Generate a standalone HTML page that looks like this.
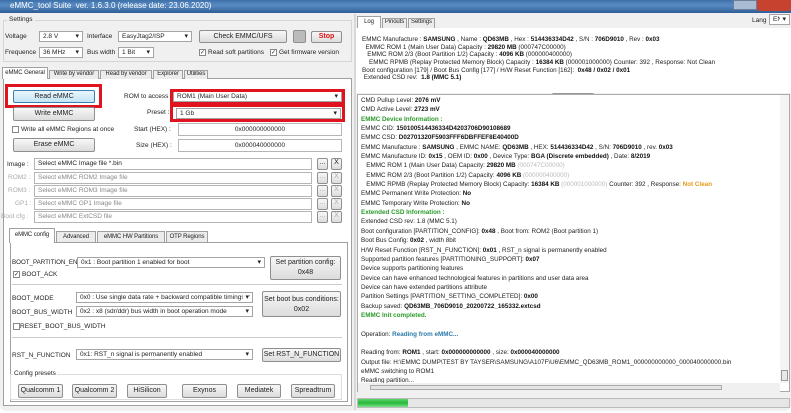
<!DOCTYPE html>
<html><head><meta charset="utf-8"><style>
*{box-sizing:border-box;margin:0;padding:0}
body{width:791px;height:413px;overflow:hidden;background:#fff;font-family:"Liberation Sans",sans-serif;font-size:7px;color:#222;position:relative}
.a{position:absolute}
.win{position:absolute;left:0;top:0;width:791px;height:411px;background:#f0f0f0;border-radius:0 0 6px 6px;overflow:hidden}
.title{left:0;top:0;width:791px;height:13px;background:linear-gradient(#3d6fa8,#5a8cc4 40%,#2f5d95);color:#fff;font-size:8px;padding:1px 0 0 10px}
.btn{position:absolute;background:linear-gradient(#f7f7f7,#dcdcdc);border:1px solid #8e8f8f;border-radius:2px;text-align:center;font-size:7px;color:#222;white-space:nowrap}
.cb{position:absolute;background:#fff;border:1px solid #a5a5a5;font-size:6.5px;padding:1px 3px;white-space:nowrap;overflow:hidden}
.cb::after{content:"▾";position:absolute;right:3px;top:0;font-size:7px;background:#fff;padding-left:2px}
.fld{position:absolute;background:#fff;border:1px solid #b5b5b5;font-size:6.5px;padding:1px 3px;white-space:nowrap;overflow:hidden}
.lbl{position:absolute;font-size:6.5px;white-space:nowrap}
.red{position:absolute;border:3px solid #e0141e}
.tab{position:absolute;border:1px solid #a0a0a0;border-bottom:none;background:#ececec;font-size:6px;text-align:center;white-space:nowrap;overflow:hidden;letter-spacing:-0.1px}
.chk{position:absolute;width:7px;height:7px;border:1px solid #888;background:#fff;font-size:6px;line-height:6px;color:#224;text-align:center}
.log div{height:9.35px;line-height:9.35px;white-space:nowrap;font-size:6.3px}
.inf div{height:7.7px;line-height:7.7px;white-space:nowrap;font-size:6.3px}
b{font-weight:bold;color:#111}
.g{color:#2a9a2a;font-weight:bold}
.gr{color:#bbb}
</style></head><body>
<div class="win">
<div class="a title">eMMC_tool Suite&nbsp; ver. 1.6.3.0 (release date: 23.06.2020)</div>
<div class="a" style="left:757px;top:0;width:34px;height:11px;background:#c8432f;border-radius:0 0 3px 3px"></div>
<div class="a" style="left:733px;top:0;width:24px;height:10px;background:#a9bcd4;border:1px solid #6a7f9c"></div>

<div class="a" style="left:3px;top:20px;width:349px;height:42px;border:1px solid #d5d5d5"></div>
<div class="lbl" style="left:7px;top:16px;background:#f0f0f0;padding:0 2px">Settings</div>
<div class="lbl" style="left:5px;top:33px">Voltage</div>
<div class="cb" style="left:39px;top:31px;width:44px;height:11px">2.8 V</div>
<div class="lbl" style="left:87px;top:33px">Interface</div>
<div class="cb" style="left:118px;top:31px;width:74px;height:11px">EasyJtag2/ISP</div>
<div class="btn" style="left:199px;top:30px;width:88px;height:13px;line-height:11px">Check EMMC/UFS</div>
<div class="btn" style="left:293px;top:30px;width:13px;height:13px;background:#bbb"></div>
<div class="btn" style="left:311px;top:31px;width:31px;height:12px;line-height:10px;color:#d11;font-weight:bold">Stop</div>
<div class="lbl" style="left:5px;top:49px">Frequence</div>
<div class="cb" style="left:39px;top:47px;width:44px;height:11px">36 MHz</div>
<div class="lbl" style="left:87px;top:49px">Bus width</div>
<div class="cb" style="left:118px;top:47px;width:36px;height:11px">1 Bit</div>
<div class="chk" style="left:199px;top:49px">✓</div><div class="lbl" style="left:208px;top:49px">Read soft partitions</div>
<div class="chk" style="left:270px;top:49px">✓</div><div class="lbl" style="left:279px;top:49px">Get firmware version</div>

<div class="a" style="left:3px;top:78px;width:349px;height:328px;background:#fff;border:1px solid #a0a0a0"></div>
<div class="tab" style="left:2px;top:67px;width:46px;height:12px;background:#fff;line-height:11px">eMMC General</div>
<div class="tab" style="left:49px;top:70px;width:50px;height:9px">Write by vendor</div>
<div class="tab" style="left:100px;top:70px;width:52px;height:9px">Read by vendor</div>
<div class="tab" style="left:153px;top:70px;width:30px;height:9px">Explorer</div>
<div class="tab" style="left:184px;top:70px;width:24px;height:9px">Utilities</div>

<div class="btn" style="left:13px;top:90px;width:82px;height:13px;line-height:11px;background:linear-gradient(#eaf6fd,#c4e5f6);border-color:#3c7fb1">Read eMMC</div>
<div class="red" style="left:5px;top:84px;width:97px;height:24px"></div>
<div class="btn" style="left:13px;top:107px;width:82px;height:14px;line-height:12px">Write eMMC</div>
<div class="chk" style="left:12px;top:126px"></div><div class="lbl" style="left:21px;top:126px">Write all eMMC Regions at once</div>
<div class="btn" style="left:13px;top:138px;width:82px;height:14px;line-height:12px">Erase eMMC</div>

<div class="lbl" style="left:124px;top:93px">ROM to access :</div>
<div class="cb" style="left:173px;top:91px;width:169px;height:11px">ROM1 (Main User Data)</div>
<div class="red" style="left:170px;top:89px;width:175px;height:16px"></div>
<div class="lbl" style="left:147px;top:109px">Preset :</div>
<div class="cb" style="left:176px;top:108px;width:165px;height:11px">1 Gb</div>
<div class="red" style="left:170px;top:104px;width:175px;height:18px"></div>
<div class="lbl" style="left:134px;top:126px">Start (HEX) :</div>
<div class="fld" style="left:178px;top:123px;width:164px;height:13px;text-align:center;line-height:10px">0x000000000000</div>
<div class="lbl" style="left:136px;top:142px">Size (HEX) :</div>
<div class="fld" style="left:178px;top:139px;width:164px;height:13px;text-align:center;line-height:10px">0x000040000000</div>

<div class="lbl" style="left:7px;top:161px">Image :</div>
<div class="fld" style="left:34px;top:158px;width:278px;height:12px">Select eMMC Image file *.bin</div>
<div class="lbl" style="left:8px;top:174px;color:#aaa">ROM2 :</div>
<div class="fld" style="left:34px;top:172px;width:278px;height:12px;color:#888">Select eMMC ROM2 Image file</div>
<div class="lbl" style="left:8px;top:187px;color:#aaa">ROM3 :</div>
<div class="fld" style="left:34px;top:185px;width:278px;height:12px;color:#888">Select eMMC ROM3 Image file</div>
<div class="lbl" style="left:15px;top:200px;color:#aaa">GP1 :</div>
<div class="fld" style="left:34px;top:198px;width:278px;height:12px;color:#888">Select eMMC GP1 Image file</div>
<div class="lbl" style="left:1px;top:213px;color:#aaa">Boot cfg :</div>
<div class="fld" style="left:34px;top:211px;width:278px;height:12px;color:#888">Select eMMC ExtCSD file</div>
<div class="btn" style="left:317px;top:158px;width:11px;height:12px">...</div><div class="btn" style="left:331px;top:158px;width:11px;height:12px">X</div>
<div class="btn" style="left:317px;top:172px;width:11px;height:12px;color:#aaa">...</div><div class="btn" style="left:331px;top:172px;width:11px;height:12px;color:#aaa">X</div>
<div class="btn" style="left:317px;top:185px;width:11px;height:12px;color:#aaa">...</div><div class="btn" style="left:331px;top:185px;width:11px;height:12px;color:#aaa">X</div>
<div class="btn" style="left:317px;top:198px;width:11px;height:12px;color:#aaa">...</div><div class="btn" style="left:331px;top:198px;width:11px;height:12px;color:#aaa">X</div>
<div class="btn" style="left:317px;top:211px;width:11px;height:12px;color:#aaa">...</div><div class="btn" style="left:331px;top:211px;width:11px;height:12px;color:#aaa">X</div>

<div class="a" style="left:10px;top:242px;width:338px;height:160px;border:1px solid #a0a0a0;background:#fff"></div>
<div class="tab" style="left:9px;top:228px;width:46px;height:15px;background:#fff;line-height:12px">eMMC config</div>
<div class="tab" style="left:56px;top:231px;width:40px;height:11px;line-height:10px">Advanced</div>
<div class="tab" style="left:97px;top:231px;width:68px;height:11px;line-height:10px">eMMC HW Partitions</div>
<div class="tab" style="left:166px;top:231px;width:42px;height:11px;line-height:10px">OTP Regions</div>

<div class="lbl" style="left:12px;top:259px;font-size:6.2px">BOOT_PARTITION_EN</div>
<div class="cb" style="left:77px;top:257px;width:188px;height:11px">0x1 : Boot partition 1 enabled for boot</div>
<div class="btn" style="left:270px;top:256px;width:71px;height:24px;line-height:10px;padding-top:1px">Set partition config:<br>0x48</div>
<div class="chk" style="left:13px;top:271px">✓</div><div class="lbl" style="left:22px;top:271px">BOOT_ACK</div>
<div class="a" style="left:12px;top:284px;width:330px;border-top:1px solid #ccc"></div>
<div class="lbl" style="left:12px;top:295px">BOOT_MODE</div>
<div class="cb" style="left:76px;top:292px;width:177px;height:11px">0x0 : Use single data rate + backward compatible timings ir</div>
<div class="lbl" style="left:12px;top:309px">BOOT_BUS_WIDTH</div>
<div class="cb" style="left:76px;top:306px;width:177px;height:11px">0x2 : x8 (sdr/ddr) bus width in boot operation mode</div>
<div class="btn" style="left:262px;top:291px;width:79px;height:26px;line-height:10px;padding-top:3px">Set boot bus conditions:<br>0x02</div>
<div class="chk" style="left:13px;top:323px"></div><div class="lbl" style="left:20px;top:323px">RESET_BOOT_BUS_WIDTH</div>
<div class="a" style="left:12px;top:337px;width:330px;border-top:1px solid #ccc"></div>
<div class="lbl" style="left:12px;top:352px">RST_N_FUNCTION</div>
<div class="cb" style="left:76px;top:349px;width:177px;height:11px">0x1: RST_n signal is permanently enabled</div>
<div class="btn" style="left:262px;top:348px;width:79px;height:14px;line-height:12px">Set RST_N_FUNCTION</div>
<div class="a" style="left:10px;top:374px;width:332px;height:26px;border:1px solid #ddd"></div>
<div class="lbl" style="left:13px;top:370px;background:#fff;padding:0 1px">Config presets</div>
<div class="btn" style="left:18px;top:384px;width:45px;height:14px;line-height:12px">Qualcomm 1</div>
<div class="btn" style="left:72px;top:384px;width:45px;height:14px;line-height:12px">Qualcomm 2</div>
<div class="btn" style="left:127px;top:384px;width:40px;height:14px;line-height:12px">HiSilicon</div>
<div class="btn" style="left:182px;top:384px;width:45px;height:14px;line-height:12px">Exynos</div>
<div class="btn" style="left:237px;top:384px;width:44px;height:14px;line-height:12px">Mediatek</div>
<div class="btn" style="left:291px;top:384px;width:44px;height:14px;line-height:12px">Spreadtrum</div>

<div class="a" style="left:354px;top:14px;width:2px;height:396px;background:#d8d8d8"></div>
<div class="tab" style="left:357px;top:16px;width:24px;height:13px;background:#fff;line-height:11px">Log</div>
<div class="tab" style="left:382px;top:18px;width:25px;height:10px">Pinouts</div>
<div class="tab" style="left:408px;top:18px;width:27px;height:10px">Settings</div>
<div class="lbl" style="left:752px;top:17px">Lang</div>
<div class="cb" style="left:769px;top:14px;width:21px;height:11px">EN</div>
<div class="a inf" style="left:356px;top:28px;width:435px;height:65px;background:#fff;padding:8px 0 0 6px">
<div>EMMC Manufacture : <b>SAMSUNG</b> , Name : <b>QD63MB</b> , Hex : <b>514436334D42</b> , S/N : <b>706D9010</b> , Rev : <b>0x03</b></div>
<div>&nbsp; EMMC ROM 1 (Main User Data) Capacity : <b>29820 MB</b> (000747C00000)</div>
<div>&nbsp;&nbsp; EMMC ROM 2/3 (Boot Partition 1/2) Capacity : <b>4096 KB</b> (000000400000)</div>
<div>&nbsp;&nbsp;&nbsp; EMMC RPMB (Replay Protected Memory Block) Capacity : <b>16384 KB</b> (000001000000) Counter: 392 , Response: Not Clean</div>
<div>Boot configuration [179] / Boot Bus Config [177] / H/W Reset Function [162]: &nbsp;<b>0x48 / 0x02 / 0x01</b></div>
<div>&nbsp;Extended CSD rev: &nbsp;<b>1.8 (MMC 5.1)</b></div>
</div>
<div class="a" style="left:552px;top:93px;width:42px;height:3px;border:1px solid #999;border-radius:2px;background:#eee"></div>
<div class="a log" style="left:357px;top:94px;width:433px;height:298px;background:#fff;border:1px solid #aaa;padding:1px 0 0 3px;overflow:hidden">
<div>CMD Pullup Level: <b>2076 mV</b></div>
<div>CMD Active Level: <b>2723 mV</b></div>
<div class="g">EMMC Device Information :</div>
<div>EMMC CID: <b>150100514436334D4203706D90108689</b></div>
<div>EMMC CSD: <b>D02701320F5903FFF6DBFFEF8E40400D</b></div>
<div>EMMC Manufacture : <b>SAMSUNG</b> , EMMC NAME: <b>QD63MB</b> , HEX: <b>514436334D42</b> , S/N: <b>706D9010</b> , rev. <b>0x03</b></div>
<div>EMMC Manufacture ID: <b>0x15</b> , OEM ID: <b>0x00</b> , Device Type: <b>BGA (Discrete embedded)</b> , Date: <b>8/2019</b></div>
<div>&nbsp;&nbsp; EMMC ROM 1 (Main User Data) Capacity: <b>29820 MB</b> <span class="gr">(000747C00000)</span></div>
<div>&nbsp;&nbsp; EMMC ROM 2/3 (Boot Partition 1/2) Capacity: <b>4096 KB</b> <span class="gr">(000000400000)</span></div>
<div>&nbsp;&nbsp; EMMC RPMB (Replay Protected Memory Block) Capacity: <b>16384 KB</b> <span class="gr">(000001000000)</span> Counter: 392 , Response: <b style="color:#e69a1a">Not Clean</b></div>
<div>EMMC Permanent Write Protection: <b>No</b></div>
<div>EMMC Temporary Write Protection: <b>No</b></div>
<div class="g">Extended CSD Information :</div>
<div>Extended CSD rev: 1.8 (MMC 5.1)</div>
<div>Boot configuration [PARTITION_CONFIG]: <b>0x48</b> , Boot from: ROM2 (Boot partition 1)</div>
<div>Boot Bus Config: <b>0x02</b> , width 8bit</div>
<div>H/W Reset Function [RST_N_FUNCTION]: <b>0x01</b> , RST_n signal is permanently enabled</div>
<div>Supported partition features [PARTITIONING_SUPPORT]: <b>0x07</b></div>
<div>Device supports partitioning features</div>
<div>Device can have enhanced technological features in partitions and user data area</div>
<div>Device can have extended partitions attribute</div>
<div>Partition Settings [PARTITION_SETTING_COMPLETED]: <b>0x00</b></div>
<div>Backup saved: <b>QD63MB_706D9010_20200722_165332.extcsd</b></div>
<div class="g">EMMC Init completed.</div>
<div></div>
<div>Operation: <b style="color:#2a7aa8">Reading from eMMC...</b></div>
<div></div>
<div>Reading from: <b>ROM1</b> , start: <b>0x000000000000</b> , size: <b>0x000040000000</b></div>
<div>Output file: H:\EMMC DUMP\TEST BY TAYSER\SAMSUNG\A107F\U6\EMMC_QD63MB_ROM1_000000000000_000040000000.bin</div>
<div>eMMC switching to ROM1</div>
<div>Reading partition...</div>
</div>
<div class="a" style="left:780px;top:95px;width:9px;height:288px;background:#f4f4f4"></div>
<div class="a" style="left:781px;top:370px;width:7px;height:11px;border:1px solid #999;background:#e8e8e8"></div>
<div class="a" style="left:358px;top:383px;width:422px;height:9px;background:#f0f0f0"></div>
<div class="a" style="left:370px;top:385px;width:352px;height:5px;border:1px solid #aaa;background:#e4e4e4"></div>
<div class="a" style="left:357px;top:398px;width:433px;height:10px;background:#e6e6e6;border:1px solid #bbb"></div>
<div class="a" style="left:358px;top:399px;width:50px;height:8px;background:linear-gradient(#5ed36a,#26b83a 50%,#7de28a)"></div>
</div>
</body></html>
